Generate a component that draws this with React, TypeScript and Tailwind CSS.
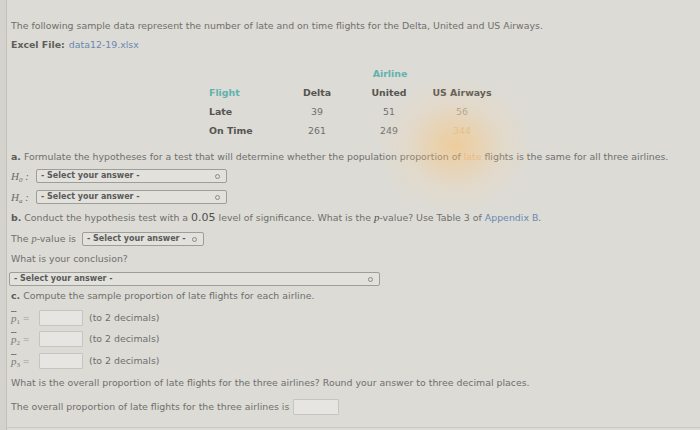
import React from "react";

function SelectBox({ w }: { w: string }) {
  return (
    <div
      className={`${w} h-[14px] border border-[#9d9d99] rounded-[2px] bg-[#e2e1dc] flex items-center justify-between pl-[4px] pr-[6px]`}
    >
      <span className="text-[8px] font-bold text-[#5a5a5a]">- Select your answer -</span>
      <span className="w-[5px] h-[5px] rounded-full border border-[#8a8a86]" />
    </div>
  );
}

function Input({ w }: { w: string }) {
  return <div className={`${w} h-[16px] border border-[#c6c6c1] rounded-[1px] bg-[#e6e5e1]`} />;
}

function PBar({ n }: { n: number }) {
  return (
    <span className="font-['Liberation_Serif',serif] italic text-[#7a7a7a] text-[11px] w-[22px] inline-flex items-baseline">
      <span className="overline">p</span>
      <sub className="text-[7px] not-italic">{n}</sub>
      <span className="ml-[3px] not-italic text-[#9a9a9a]">=</span>
    </span>
  );
}

export default function App() {
  return (
    <div className="relative w-[700px] h-[430px] overflow-hidden bg-[#dcdbd6] flex font-['DejaVu_Sans',sans-serif] text-[9.4px] text-[#6f6f6c]">
      <div className="w-[7px] h-full bg-[#d3d2cc] border-r border-[#c2c1bb]" />
      <div className="flex-1 pl-[4px] flex flex-col border-b border-[#c8c7c1] h-[428px]">
        <div className="mt-[17px] h-[18px] flex items-center">
          The following sample data represent the number of late and on time flights for the Delta, United and US Airways.
        </div>
        <div className="mt-[1px] h-[18px] flex items-center">
          <span className="font-bold text-[#5e5e5b]">Excel File:</span>
          <span className="ml-[4px] text-[#6a87b3]">data12-19.xlsx</span>
        </div>

        <div className="mt-[11px] ml-[198px] grid grid-cols-[76px_64px_80px_66px] auto-rows-[19px] items-center">
          <div />
          <div className="col-span-3 text-center font-bold text-[#5fb3ae]">Airline</div>
          <div className="font-bold text-[#5fb3ae]">Flight</div>
          <div className="text-center font-bold text-[#555552]">Delta</div>
          <div className="text-center font-bold text-[#555552]">United</div>
          <div className="text-center font-bold text-[#555552]">US Airways</div>
          <div className="font-bold text-[#555552]">Late</div>
          <div className="text-center">39</div>
          <div className="text-center">51</div>
          <div className="text-center text-[#a09a8e]">56</div>
          <div className="font-bold text-[#555552]">On Time</div>
          <div className="text-center">261</div>
          <div className="text-center">249</div>
          <div className="text-center text-[#d6bf98]">344</div>
        </div>

        <div className="mt-[7px] h-[18px] flex items-center whitespace-nowrap">
          <span className="font-bold text-[#5a5a57]">a.</span>
          <span className="ml-[3px]">
            Formulate the hypotheses for a test that will determine whether the population proportion of{" "}
            <span className="text-[#dfb98c]">late</span> flights is the same for all three airlines.
          </span>
        </div>
        <div className="h-[20px] flex items-center">
          <span className="font-['Liberation_Serif',serif] italic text-[11px] text-[#6b6b68] w-[25px]">
            H<sub className="text-[7px]">0</sub> :
          </span>
          <SelectBox w="w-[191px]" />
        </div>
        <div className="mt-[1px] h-[20px] flex items-center">
          <span className="font-['Liberation_Serif',serif] italic text-[11px] text-[#6b6b68] w-[25px]">
            H<sub className="text-[7px]">a</sub> :
          </span>
          <SelectBox w="w-[191px]" />
        </div>
        <div className="mt-[1px] h-[20px] flex items-center">
          <span className="font-bold text-[#5a5a57]">b.</span>
          <span className="ml-[3px]">
            Conduct the hypothesis test with a <span className="text-[11px] text-[#4f4f4c]">0.05</span> level of significance.
            What is the <span className="font-['Liberation_Serif',serif] italic text-[11px] text-[#4f4f4c]">p</span>-value? Use
            Table 3 of <span className="text-[#6a87b3]">Appendix B</span>.
          </span>
        </div>
        <div className="mt-[1px] h-[20px] flex items-center">
          <span className="w-[71px]">
            The <span className="font-['Liberation_Serif',serif] italic text-[10.5px]">p</span>-value is
          </span>
          <SelectBox w="w-[122px]" />
        </div>
        <div className="h-[20px] flex items-center">What is your conclusion?</div>
        <div className="h-[20px] flex items-center -ml-[2px]">
          <SelectBox w="w-[371px]" />
        </div>
        <div className="h-[15px] flex items-center">
          <span className="font-bold text-[#5a5a57]">c.</span>
          <span className="ml-[3px]">Compute the sample proportion of late flights for each airline.</span>
        </div>
        <div className="mt-[4px] h-[20px] flex items-center">
          <PBar n={1} />
          <Input w="w-[44px] ml-[6px]" />
          <span className="ml-[6px]">(to 2 decimals)</span>
        </div>
        <div className="mt-[1px] h-[20px] flex items-center">
          <PBar n={2} />
          <Input w="w-[44px] ml-[6px]" />
          <span className="ml-[6px]">(to 2 decimals)</span>
        </div>
        <div className="mt-[2px] h-[20px] flex items-center">
          <PBar n={3} />
          <Input w="w-[44px] ml-[6px]" />
          <span className="ml-[6px]">(to 2 decimals)</span>
        </div>
        <div className="mt-[2px] h-[20px] flex items-center">
          What is the overall proportion of late flights for the three airlines? Round your answer to three decimal places.
        </div>
        <div className="mt-[4px] h-[20px] flex items-center">
          <span>The overall proportion of late flights for the three airlines is</span>
          <Input w="w-[46px] ml-[4px]" />
        </div>
      </div>
      <div className="pointer-events-none absolute left-[375px] top-[75px] w-[160px] h-[140px] bg-[radial-gradient(closest-side,rgba(255,190,100,0.5),rgba(255,210,150,0.18)_60%,transparent)]" />
    </div>
  );
}
